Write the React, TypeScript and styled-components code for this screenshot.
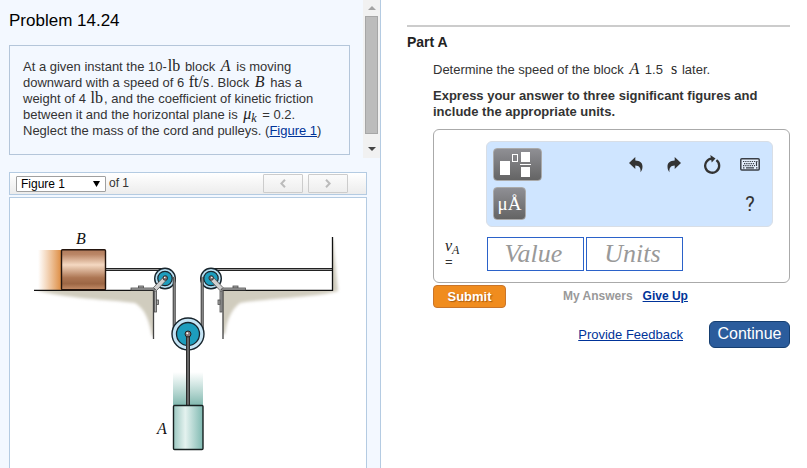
import React from "react";
import styled, { createGlobalStyle, css } from "styled-components";

const Global = createGlobalStyle`
  *, *::before, *::after { box-sizing: border-box; }
  body {
    margin: 0;
    background: #fff;
    color: #333;
    font: 13px/17px "Liberation Sans", Arial, sans-serif;
  }
  button, input, select { font-family: inherit; margin: 0; }
  h1, h2, p { margin: 0; }
`;

const Page = styled.div`
  display: grid;
  grid-template-columns: minmax(0, 381fr) minmax(0, 426fr);
  min-height: 100vh;
`;

const Sidebar = styled.aside`
  display: flex;
  flex-direction: column;
  background: #f3f8ff;
  border-right: 1px solid #b4cbe2;
`;

const ProblemPane = styled.section`
  display: flex;
  justify-content: space-between;
`;

const ProblemBody = styled.div`
  flex: 1;
  padding: 12px 13px 3px 9px;
`;

const Title = styled.h1`
  font-size: 17px;
  line-height: 18px;
  font-weight: normal;
  color: #000;
`;

const Statement = styled.p`
  margin-top: 15px;
  padding: 13px 13px 15px;
  border: 1px solid #b4c6da;
  line-height: 16px;
  white-space: nowrap;
`;

const MathText = styled.span<{ $italic?: boolean }>`
  margin: ${(p) => (p.$italic ? "0 2px" : "0 1px")};
  font-family: "Liberation Serif", "Times New Roman", serif;
  font-size: 16px;
  line-height: 1px;
  font-style: ${(p) => (p.$italic ? "italic" : "normal")};
  color: #222;
`;

const Sub = styled.sub`
  font-size: 12px;
  line-height: 1px;
  vertical-align: -3px;
`;

const Link = styled.a<{ $bold?: boolean }>`
  color: #003399;
  font-weight: ${(p) => (p.$bold ? "bold" : "normal")};
  text-decoration: underline;
`;

const ScrollTrack = styled.div`
  display: flex;
  flex-direction: column;
  width: 17px;
  padding: 0 2px;
  background: #f1f1f1;
`;

const ScrollThumb = styled.div`
  flex: 1;
  background: #bcbcbc;
  border: 1px solid #a6a6a6;
`;

const ScrollArrow = styled.button<{ $tall?: boolean }>`
  display: flex;
  align-items: center;
  justify-content: center;
  height: ${(p) => (p.$tall ? 24 : 16)}px;
  padding: ${(p) => (p.$tall ? "6px 0 0" : "0")};
  border: 0;
  background: none;
`;

const FigureBar = styled.div`
  display: flex;
  align-items: center;
  height: 23px;
  margin: 14px 13px 2px 9px;
  padding: 0 18px 0 6px;
  border: 1px solid #b4cbe2;
  background: linear-gradient(#fff, #ececec);
`;

const SelectWrap = styled.div`
  display: flex;
  position: relative;
  width: 90px;
  margin-right: 3px;
  svg { position: absolute; right: 6px; top: 5px; pointer-events: none; }
`;

const FigureSelect = styled.select`
  appearance: none;
  width: 100%;
  height: 16px;
  padding: 0 4px;
  border: 1px solid #a0a0a0;
  border-radius: 1px;
  background: #fff;
  color: #000;
  font-size: 12px;
  line-height: 14px;
`;

const FigureCount = styled.span`
  flex: 1;
  font-size: 12px;
`;

const PagerButton = styled.button`
  display: flex;
  align-items: center;
  justify-content: center;
  width: 40px;
  height: 19px;
  margin-left: 5px;
  padding: 0;
  border: 1px solid #ccc;
  border-radius: 1px;
  background: linear-gradient(#fbfbfb, #eee);
`;

const FigureBox = styled.figure`
  flex: 1;
  margin: 0 13px 0 9px;
  border: solid #b4cbe2;
  border-width: 1px 1px 0;
  background: #fff;
  svg { display: block; width: 100%; }
`;

const Main = styled.main`
  padding: 25px 17px 0 26px;
`;

const PartTitle = styled.h2`
  padding-top: 7px;
  border-top: 2px solid #ccc;
  font-size: 14px;
  line-height: 16px;
  color: #222;
`;

const Part = styled.div`
  padding: 11px 0 0 26px;
`;

const Instruction = styled.p`
  margin: 10px 0 9px;
  font-weight: bold;
  line-height: 16px;
`;

const AnswerBox = styled.div`
  padding: 11px 16px 11px 11px;
  border: 1px solid #aaa;
  border-radius: 6px;
`;

const Toolbar = styled.div`
  display: flex;
  justify-content: space-between;
  margin-left: 41px;
  padding: 6px;
  border: 1px solid #d8dee6;
  border-radius: 6px;
  background: #cfe5ff;
`;

const Stack = styled.div`
  display: flex;
  flex-direction: column;
  align-items: flex-start;
  gap: 6px;
`;

const PaletteButton = styled.button<{ $wide?: boolean }>`
  display: flex;
  align-items: center;
  justify-content: center;
  width: ${(p) => (p.$wide ? 49 : 33)}px;
  height: 33px;
  padding: 0;
  border: 1px solid #aaa;
  border-radius: 4px;
  background: linear-gradient(#8f8f94, #646464);
  color: #fff;
  font: 19px/30px "Liberation Serif", serif;
`;

const Tools = styled.div`
  display: grid;
  grid-template-columns: repeat(4, 38px);
  grid-template-rows: 33px 33px;
  row-gap: 6px;
  margin-right: -3px;
`;

const ToolButton = styled.button<{ $last?: boolean }>`
  display: flex;
  align-items: center;
  justify-content: center;
  padding: 0;
  border: 0;
  background: none;
  color: #333;
  font: 20px/24px Roboto, sans-serif;
  ${(p) => p.$last && css`grid-column: 4;`}
`;

const AnswerRow = styled.div`
  display: flex;
  align-items: center;
  gap: 2px;
  margin-top: 10px;
`;

const AnswerLabel = styled.label`
  width: 40px;
  line-height: 15px;
  ${MathText} { margin: 0; }
`;

const AnswerInput = styled.input`
  width: 97px;
  height: 34px;
  padding: 0 4px 1px 0;
  border: 1px solid #2b62c9;
  background: #fff;
  text-align: center;
  font: italic 26px/30px "Liberation Serif", serif;
  &::placeholder { color: #999; opacity: 1; }
`;

const Actions = styled.div`
  display: flex;
  align-items: center;
  margin-top: 2px;
  font-size: 12px;
`;

const SubmitButton = styled.button`
  width: 73px;
  height: 23px;
  margin-right: 57px;
  padding: 0;
  border: 1px solid #c9752a;
  border-radius: 4px;
  background: #f08c1e;
  color: #fff;
  font-size: 13px;
  font-weight: bold;
  text-shadow: 1px 1px 1px #a85c10;
`;

const Muted = styled.span`
  margin-right: 10px;
  color: #999;
  font-weight: bold;
`;

const Footer = styled.div`
  display: flex;
  align-items: center;
  justify-content: flex-end;
  gap: 26px;
  margin-top: 13px;
`;

const ContinueButton = styled.button`
  width: 81px;
  height: 27px;
  padding: 0 0 2px;
  border: 1px solid #153e70;
  border-radius: 6px;
  background: #2b5c9c;
  color: #fff;
  font-size: 16px;
`;

const Triangle = ({ up, color }: { up?: boolean; color: string }) => (
  <svg width="8" height="4" viewBox="0 0 8 4">
    <path d={up ? "M0 4 4 0 8 4z" : "M0 0H8L4 4z"} fill={color} />
  </svg>
);

const Chevron = ({ right }: { right?: boolean }) => (
  <svg width="6" height="9" viewBox="0 0 6 9" fill="none" stroke="#bbb" strokeWidth="2">
    <path d={right ? "M1 .7 4.7 4.5 1 8.3" : "M5 .7 1.3 4.5 5 8.3"} />
  </svg>
);

const turnPath = "M0 6 6.3 0V3.5C11 3.7 13.5 6 13.5 9.5 13.5 12 12.8 13.8 11.5 15.2 12 11.4 10.5 8.6 6.3 8.6V12z";

const UndoIcon = () => (
  <svg width="14" height="16" viewBox="0 0 14 16"><path d={turnPath} fill="#333" /></svg>
);

const RedoIcon = () => (
  <svg width="14" height="16" viewBox="0 0 14 16">
    <path d={turnPath} fill="#333" transform="matrix(-1 0 0 1 14 0)" />
  </svg>
);

const ResetIcon = () => (
  <svg width="18" height="19" viewBox="0 0 18 19">
    <path d="M13.4 5.1A7 7 0 1 1 8.8 3.7" fill="none" stroke="#333" strokeWidth="2.3" />
    <path d="M7.3 0 12.5 3.6 8.7 7.6z" fill="#333" />
  </svg>
);

const KeyboardIcon = () => (
  <svg width="20" height="13" viewBox="0 0 20 13">
    <rect x=".8" y=".8" width="18.4" height="11.2" rx="1" fill="#e6f0fc" stroke="#3a3f47" strokeWidth="1.5" />
    <path d="M3 3.5H17.5M4 5.7H15M3 7.7H15" stroke="#3a3f47" strokeWidth="1.2" strokeDasharray="1.3 .9" />
    <path d="M6 9.8H14M3 9.8H4.5M16 9.8H17.5M16.5 4V8" stroke="#3a3f47" strokeWidth="1.2" />
  </svg>
);

const TemplateIcon = () => (
  <svg width="35" height="27" viewBox="0 0 35 27">
    <path d="M0 10H10V24H0z M21 1H30V11H21z M21 16H30V26H21z M20 13H31V14H20z" fill="#fff" />
    <rect x="12.5" y="3.5" width="5" height="7" fill="none" stroke="#fff" />
  </svg>
);

const SmallPulley = ({ x }: { x: number }) => (
  <g stroke="#17242c">
    <circle cx={x} cy="278.5" r="10.3" fill="#b9e0f2" strokeWidth="1.4" />
    <circle cx={x} cy="278.5" r="7.2" fill="#1d9dbd" strokeWidth="1.2" />
  </g>
);

const Bracket = () => (
  <g stroke="#4c4c4c" fill="#aaa" strokeWidth=".8">
    <rect x="138.5" y="286" width="5" height="2.2" />
    <rect x="131" y="288" width="24" height="2" />
    <rect x="154.5" y="291" width="2" height="21" />
    <rect x="156.5" y="300" width="2" height="4.5" />
    <path d="M153.5 287.5 164 276.5 167 279.5 156.5 290.5z" fill="#d0d0d0" />
    <circle cx="165.3" cy="278" r="2.3" fill="#806f70" stroke="#222" />
    <circle cx="164.7" cy="277.5" r=".8" fill="#fff" stroke="none" />
  </g>
);

const PulleyFigure = () => (
  <svg viewBox="10 198 356 270" role="img" aria-label="Block B on a plane joined by a cord over pulleys to block A">
    <defs>
      <linearGradient id="copper" x2="0" y2="1">
        <stop offset="0" stopColor="#b07a5a" />
        <stop offset=".12" stopColor="#bb8767" />
        <stop offset=".38" stopColor="#f5d9c2" />
        <stop offset=".7" stopColor="#ad7653" />
        <stop offset=".85" stopColor="#9c6644" />
        <stop offset="1" stopColor="#c58d68" />
      </linearGradient>
      <linearGradient id="trailB">
        <stop offset="0" stopColor="#e39a55" stopOpacity="0" />
        <stop offset="1" stopColor="#de8e45" />
      </linearGradient>
      <linearGradient id="glass">
        <stop offset="0" stopColor="#9cc8c1" />
        <stop offset=".4" stopColor="#e4f2ef" />
        <stop offset="1" stopColor="#7fb9b1" />
      </linearGradient>
      <linearGradient id="trailA" x2="0" y2="1">
        <stop offset="0" stopColor="#8dc2b9" stopOpacity="0" />
        <stop offset="1" stopColor="#83b9b0" />
      </linearGradient>
      <filter id="soft" x="-10%" y="-10%" width="120%" height="130%">
        <feGaussianBlur stdDeviation="1.5" />
      </filter>
      <clipPath id="leftGround"><path d="M30 290H153.5V345H30z" /></clipPath>
      <clipPath id="rightGround"><path d="M223 290H332.5V230H350V345H223z" /></clipPath>
    </defs>

    <g fill="#d0ccbe">
      <g clipPath="url(#leftGround)">
        <path filter="url(#soft)" d="M37 287H157V336H152C149 320 145 309 135 303 112 300 60 298 37 290z" />
      </g>
      <g clipPath="url(#rightGround)">
        <path filter="url(#soft)" d="M220 287H329V240H333L338 291C320 297 260 299 240 303 231 310 227 320 225 334H220z" />
      </g>
    </g>

    <rect x="38" y="250" width="23" height="40" fill="url(#trailB)" />
    <path d="M106 269.5H165M211 269.5H332" stroke="#222" strokeWidth="3" />
    <path d="M106 269.5H165M211 269.5H332" stroke="#999" strokeWidth="1" />
    <path d="M34 290.3H154M223 290.3H333M332.5 237V291" stroke="#111" strokeWidth="1.3" />
    <path d="M153.5 290V339M223 290V339" stroke="#444" strokeWidth="1.3" />
    <rect x="61.5" y="249.7" width="44" height="40" rx="1" fill="url(#copper)" stroke="#24150e" strokeWidth="1.4" />

    <SmallPulley x={165} />
    <SmallPulley x={211} />
    <path d="M174.2 277V333M202.2 277V333" stroke="#333" strokeWidth="3" />
    <path d="M174.2 277V333M202.2 277V333" stroke="#aaa" strokeWidth="1" />
    <Bracket />
    <g transform="matrix(-1 0 0 1 376.5 0)"><Bracket /></g>

    <circle cx="188" cy="334" r="16" fill="#c5e4f5" stroke="#17242c" strokeWidth="1.4" />
    <circle cx="188" cy="334" r="11.5" fill="#1d9dbd" stroke="#17242c" strokeWidth="1.3" />
    <rect x="173" y="372" width="30" height="33" fill="url(#trailA)" />
    <path d="M188 335V405" stroke="#2b2b2b" strokeWidth="4" />
    <path d="M188 335V405" stroke="#666" strokeWidth="2" />
    <circle cx="188" cy="334" r="3" fill="#89797a" stroke="#222" />
    <circle cx="187.3" cy="333.2" r="1" fill="#fff" />
    <rect x="173.5" y="405.5" width="29.5" height="44" rx="1" fill="url(#glass)" stroke="#172020" strokeWidth="1.4" />
    <g fontFamily="Liberation Serif, serif" fontStyle="italic" fontSize="16" fill="#111">
      <text x="76" y="244">B</text>
      <text x="157" y="434">A</text>
    </g>
  </svg>
);

export default function App() {
  return (
    <>
      <Global />
      <Page>
        <Sidebar>
          <ProblemPane>
            <ProblemBody>
              <Title>Problem 14.24</Title>
              <Statement>
                At a given instant the 10-<MathText>lb</MathText> block <MathText $italic>A</MathText> is moving<br />
                downward with a speed of 6 <MathText>ft/s</MathText>. Block <MathText $italic>B</MathText> has a<br />
                weight of 4 <MathText>lb</MathText>, and the coefficient of kinetic friction<br />
                between it and the horizontal plane is <MathText $italic>μ<Sub>k</Sub></MathText> = 0.2.<br />
                Neglect the mass of the cord and pulleys. (<Link href="#figure">Figure 1</Link>)
              </Statement>
            </ProblemBody>
            <ScrollTrack>
              <ScrollArrow aria-label="Scroll up"><Triangle up color="#a3a3a3" /></ScrollArrow>
              <ScrollThumb />
              <ScrollArrow $tall aria-label="Scroll down"><Triangle color="#444" /></ScrollArrow>
            </ScrollTrack>
          </ProblemPane>
          <FigureBar>
            <SelectWrap>
              <FigureSelect aria-label="Figure"><option>Figure 1</option></FigureSelect>
              <svg width="7" height="6" viewBox="0 0 7 6"><path d="M0 0H7L3.5 6z" fill="#000" /></svg>
            </SelectWrap>
            <FigureCount>of 1</FigureCount>
            <PagerButton aria-label="Previous figure"><Chevron /></PagerButton>
            <PagerButton aria-label="Next figure"><Chevron right /></PagerButton>
          </FigureBar>
          <FigureBox id="figure"><PulleyFigure /></FigureBox>
        </Sidebar>
        <Main>
          <PartTitle>Part A</PartTitle>
          <Part>
            <p>
              Determine the speed of the block <MathText $italic>A</MathText> 1.5 &nbsp;<MathText>s</MathText> later.
            </p>
            <Instruction>
              Express your answer to three significant figures and include the appropriate units.
            </Instruction>
            <AnswerBox>
              <Toolbar>
                <Stack>
                  <PaletteButton $wide aria-label="Templates"><TemplateIcon /></PaletteButton>
                  <PaletteButton>μÅ</PaletteButton>
                </Stack>
                <Tools>
                  <ToolButton aria-label="Undo"><UndoIcon /></ToolButton>
                  <ToolButton aria-label="Redo"><RedoIcon /></ToolButton>
                  <ToolButton aria-label="Reset"><ResetIcon /></ToolButton>
                  <ToolButton aria-label="Keyboard shortcuts"><KeyboardIcon /></ToolButton>
                  <ToolButton $last>?</ToolButton>
                </Tools>
              </Toolbar>
              <AnswerRow>
                <AnswerLabel htmlFor="value">
                  <MathText $italic>v<Sub>A</Sub></MathText><br />=
                </AnswerLabel>
                <AnswerInput id="value" placeholder="Value" />
                <AnswerInput aria-label="Units" placeholder="Units" />
              </AnswerRow>
            </AnswerBox>
            <Actions>
              <SubmitButton>Submit</SubmitButton>
              <Muted>My Answers</Muted>
              <Link $bold href="#give-up">Give Up</Link>
            </Actions>
            <Footer>
              <Link href="#feedback">Provide Feedback</Link>
              <ContinueButton>Continue</ContinueButton>
            </Footer>
          </Part>
        </Main>
      </Page>
    </>
  );
}
